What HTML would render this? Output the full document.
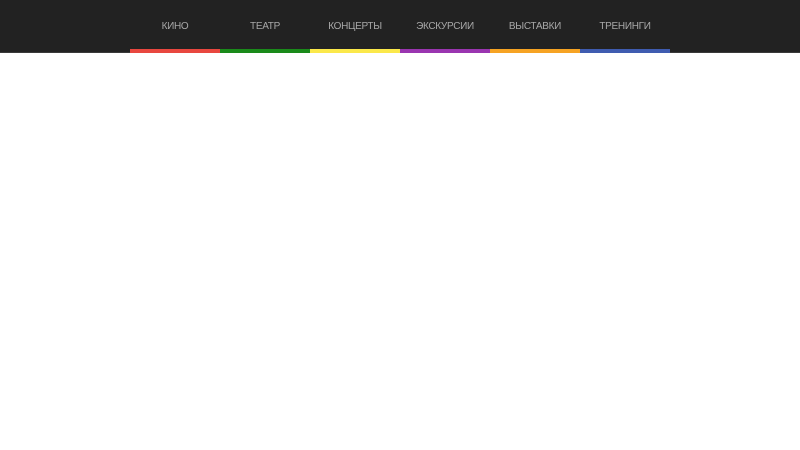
<!DOCTYPE html>
<html><head><meta charset="utf-8"><style>
html,body{margin:0;padding:0;background:#fff;width:800px;height:450px;overflow:hidden}
.hdr{position:absolute;left:0;top:0;width:800px;height:53px;background:#222;border-bottom:1px solid #3a3a3a;box-sizing:border-box}
.nav{position:absolute;left:130px;top:0;display:flex}
.nav div{width:90px;height:53px;position:relative;text-align:center;font:10px/53px "Liberation Sans",sans-serif;letter-spacing:-0.3px;color:#a8a8a8;box-sizing:border-box}
.nav div:after{content:"";position:absolute;left:0;right:0;bottom:0;height:4px;background:var(--c)}
</style></head><body>
<div class="hdr"></div>
<div class="nav">
<div style="--c:#e8473f">КИНО</div>
<div style="--c:#1a8a1a">ТЕАТР</div>
<div style="--c:#fbe84a">КОНЦЕРТЫ</div>
<div style="--c:#9a35b0">ЭКСКУРСИИ</div>
<div style="--c:#f6a323">ВЫСТАВКИ</div>
<div style="--c:#3f5cb0">ТРЕНИНГИ</div>
</div>
</body></html>
